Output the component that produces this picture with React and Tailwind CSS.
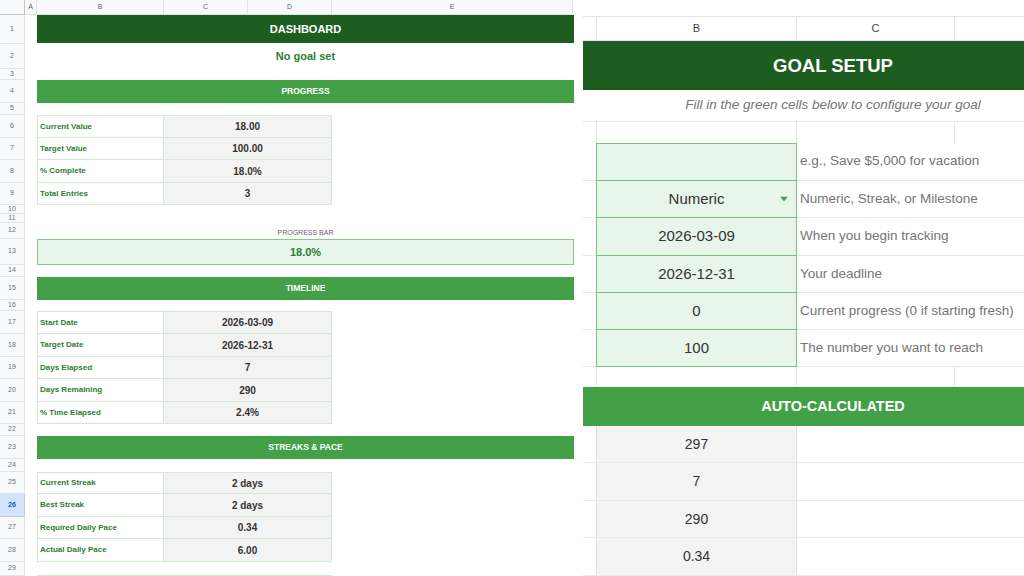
import React from "react";

// left sheet: one row of the grid with its row number
const Row = ({ n, h, sel, children }) => (
  <div className={`flex ${h}`}>
    <div
      className={`w-[25px] shrink-0 flex items-center justify-center border-r border-b text-[7px] ${
        sel
          ? "bg-[#d3e3fd] text-[#0b57d0] font-bold border-[#c2cbe0]"
          : "bg-[#f8f9fa] text-[#6b6f73] border-[#e1e3e6]"
      }`}
    >
      {n}
    </div>
    <div className="w-[12px] shrink-0" />
    <div className="w-[537px] flex">{children}</div>
  </div>
);

const Band = ({ dark, children }) => (
  <div
    className={`flex-1 flex items-center justify-center text-white font-bold ${
      dark ? "bg-[#1d5e20] text-[11px]" : "bg-[#43a047] text-[8.5px]"
    }`}
  >
    {children}
  </div>
);

const TRow = ({ label, value, first }) => (
  <div
    className={`flex w-[295px] border-x border-b border-[#d3e9d3] ${
      first ? "border-t" : ""
    }`}
  >
    <div className="w-[126px] shrink-0 border-r border-[#d3e9d3] flex items-center pl-[2px] text-[8px] font-bold text-[#2e7d32]">
      {label}
    </div>
    <div className="flex-1 bg-[#f3f3f3] flex items-center justify-center text-[10px] font-bold text-[#333]">
      {value}
    </div>
  </div>
);

const InputRow = ({ value, desc, first, dropdown, h }) => (
  <div className={`flex ${h}`}>
    <div className="w-[13px] shrink-0 border-b border-[#dcebdc]" />
    <div
      className={`w-[201px] shrink-0 relative bg-[#e8f5e9] border-x border-b border-[#7fbf81] flex items-center justify-center text-[15px] text-[#333] ${
        first ? "border-t" : ""
      }`}
    >
      {value}
      {dropdown && (
        <svg
          className="absolute right-[8px] top-1/2 -translate-y-1/2"
          width="8"
          height="5"
          viewBox="0 0 8 5"
        >
          <path d="M0 0h8L4 5z" fill="#43a047" />
        </svg>
      )}
    </div>
    <div className="flex-1 border-b border-[#dcebdc] flex items-center pl-[3px] text-[13.5px] text-[#757575] whitespace-nowrap">
      {desc}
    </div>
  </div>
);

const AutoRow = ({ value, h }) => (
  <div className={`flex ${h}`}>
    <div className="w-[13px] shrink-0 border-b border-[#e7ede7]" />
    <div className="w-[201px] shrink-0 bg-[#f3f3f3] border-x border-b border-x-[#d3e9d3] border-b-[#e7ede7] flex items-center justify-center text-[14px] text-[#333]">
      {value}
    </div>
    <div className="flex-1 border-b border-[#e7ede7]" />
  </div>
);

const EmptyRow = ({ h }) => (
  <div className={`flex ${h}`}>
    <div className="w-[14px] shrink-0 border-r border-[#e6e6e6]" />
    <div className="w-[200px] shrink-0 border-r border-[#e6e6e6]" />
    <div className="w-[158px] shrink-0 border-r border-[#e6e6e6]" />
    <div className="flex-1" />
  </div>
);

export default function App() {
  return (
    <div className="w-[1024px] h-[576px] overflow-hidden bg-white flex font-['Liberation_Sans',Arial,sans-serif]">
      {/* left: dashboard sheet */}
      <div className="w-[577px] shrink-0 flex flex-col">
        <div className="flex h-[15px] text-[7px] text-[#5f6368]">
          <div className="w-[25px] bg-[#f8f9fa] border-r border-b border-[#c4c7c5]" />
          <div className="w-[12px] flex items-center justify-center bg-[#f8f9fa] border-r border-b border-[#e1e3e6]">A</div>
          <div className="w-[127px] flex items-center justify-center bg-[#f8f9fa] border-r border-b border-[#e1e3e6]">B</div>
          <div className="w-[84px] flex items-center justify-center bg-[#f8f9fa] border-r border-b border-[#e1e3e6]">C</div>
          <div className="w-[84px] flex items-center justify-center bg-[#f8f9fa] border-r border-b border-[#e1e3e6]">D</div>
          <div className="w-[241px] flex items-center justify-center bg-[#f8f9fa] border-r border-b border-[#e1e3e6]">E</div>
        </div>

        <Row n={1} h="h-[29px]">
          <div className="flex-1 flex pb-px">
            <Band dark>DASHBOARD</Band>
          </div>
        </Row>
        <Row n={2} h="h-[25px]">
          <div className="flex-1 flex items-center justify-center text-[11px] font-bold text-[#2e7d32]">
            No goal set
          </div>
        </Row>
        <Row n={3} h="h-[11px]" />
        <Row n={4} h="h-[23px]">
          <Band>PROGRESS</Band>
        </Row>
        <Row n={5} h="h-[12px]" />
        <Row n={6} h="h-[23px]">
          <TRow first label="Current Value" value="18.00" />
        </Row>
        <Row n={7} h="h-[22px]">
          <TRow label="Target Value" value="100.00" />
        </Row>
        <Row n={8} h="h-[23px]">
          <TRow label="% Complete" value="18.0%" />
        </Row>
        <Row n={9} h="h-[22px]">
          <TRow label="Total Entries" value="3" />
        </Row>
        <Row n={10} h="h-[9px]" />
        <Row n={11} h="h-[9px]" />
        <Row n={12} h="h-[16px]">
          <div className="flex-1 flex items-end justify-center pb-[1px] text-[7px] text-[#666]">
            PROGRESS BAR
          </div>
        </Row>
        <Row n={13} h="h-[26px]">
          <div className="flex-1 flex items-center justify-center bg-[#e8f5e9] border border-[#8cc48e] text-[11px] font-bold text-[#2e7d32]">
            18.0%
          </div>
        </Row>
        <Row n={14} h="h-[12px]" />
        <Row n={15} h="h-[23px]">
          <Band>TIMELINE</Band>
        </Row>
        <Row n={16} h="h-[11px]" />
        <Row n={17} h="h-[23px]">
          <TRow first label="Start Date" value="2026-03-09" />
        </Row>
        <Row n={18} h="h-[23px]">
          <TRow label="Target Date" value="2026-12-31" />
        </Row>
        <Row n={19} h="h-[22px]">
          <TRow label="Days Elapsed" value="7" />
        </Row>
        <Row n={20} h="h-[23px]">
          <TRow label="Days Remaining" value="290" />
        </Row>
        <Row n={21} h="h-[22px]">
          <TRow label="% Time Elapsed" value="2.4%" />
        </Row>
        <Row n={22} h="h-[12px]" />
        <Row n={23} h="h-[23px]">
          <Band>STREAKS &amp; PACE</Band>
        </Row>
        <Row n={24} h="h-[13px]" />
        <Row n={25} h="h-[22px]">
          <TRow first label="Current Streak" value="2 days" />
        </Row>
        <Row n={26} h="h-[23px]" sel>
          <TRow label="Best Streak" value="2 days" />
        </Row>
        <Row n={27} h="h-[22px]">
          <TRow label="Required Daily Pace" value="0.34" />
        </Row>
        <Row n={28} h="h-[23px]">
          <TRow label="Actual Daily Pace" value="6.00" />
        </Row>
        <Row n={29} h="h-[14px]">
          <div className="w-[295px] self-end border-b border-[#d3e9d3]" />
        </Row>
      </div>

      <div className="w-[6px] shrink-0" />

      {/* right: goal setup sheet */}
      <div className="w-[441px] shrink-0 overflow-hidden flex flex-col">
        <div className="h-[16px]" />
        <div className="flex h-[25px] border-t border-b border-[#e1e3e6] text-[11px] text-[#444]">
          <div className="w-[14px] shrink-0 border-r border-[#e1e3e6]" />
          <div className="w-[200px] shrink-0 border-r border-[#e1e3e6] flex items-center justify-center">B</div>
          <div className="w-[158px] shrink-0 border-r border-[#e1e3e6] flex items-center justify-center">C</div>
          <div className="flex-1" />
        </div>
        <div className="h-[49px] shrink-0 bg-[#1d5e20] flex items-center">
          <div className="ml-[14px] w-[472px] shrink-0 text-center text-white font-bold text-[18.5px]">
            GOAL SETUP
          </div>
        </div>
        <div className="h-[32px] shrink-0 border-b border-[#e6e6e6] flex items-center">
          <div className="ml-[14px] w-[472px] shrink-0 text-center italic text-[13.5px] text-[#757575]">
            Fill in the green cells below to configure your goal
          </div>
        </div>
        <EmptyRow h="h-[21px]" />
        <InputRow first h="h-[38px]" value="" desc="e.g., Save $5,000 for vacation" />
        <InputRow dropdown h="h-[37px]" value="Numeric" desc="Numeric, Streak, or Milestone" />
        <InputRow h="h-[38px]" value="2026-03-09" desc="When you begin tracking" />
        <InputRow h="h-[37px]" value="2026-12-31" desc="Your deadline" />
        <InputRow h="h-[37px]" value="0" desc="Current progress (0 if starting fresh)" />
        <InputRow h="h-[37px]" value="100" desc="The number you want to reach" />
        <EmptyRow h="h-[20px]" />
        <div className="h-[39px] shrink-0 bg-[#43a047] flex items-center">
          <div className="ml-[14px] w-[472px] shrink-0 text-center text-white font-bold text-[14.5px]">
            AUTO-CALCULATED
          </div>
        </div>
        <AutoRow h="h-[37px]" value="297" />
        <AutoRow h="h-[38px]" value="7" />
        <AutoRow h="h-[37px]" value="290" />
        <AutoRow h="h-[38px]" value="0.34" />
      </div>
    </div>
  );
}
